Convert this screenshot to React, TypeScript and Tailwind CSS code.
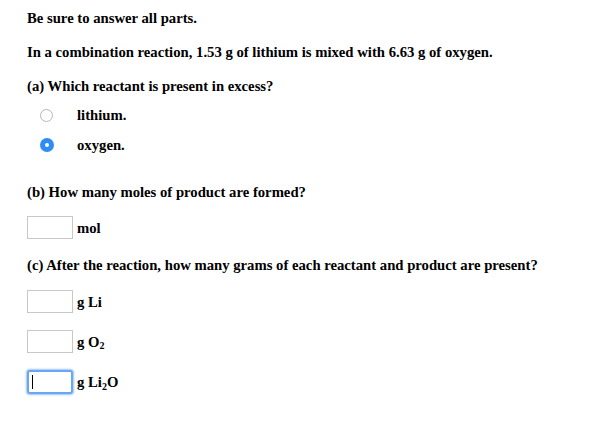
import React from "react";

const font = { fontFamily: '"Liberation Serif", "Times New Roman", serif' };

function Box({ focused = false }: { focused?: boolean }) {
  return focused ? (
    <div className="w-[46px] h-[24px] rounded-[3px] border-2 border-[#6aa7f0] shadow-[0_0_2px_1px_#9cc4f5] bg-white flex items-center pl-[3px]">
      <div className="w-px h-[14px] bg-black" />
    </div>
  ) : (
    <div className="w-[46px] h-[23px] border border-[#c8c8c8] bg-white" />
  );
}

export default function App() {
  return (
    <div style={font} className="w-[614px] h-[422px] bg-white text-black font-bold text-[14.7px] leading-[16px] pl-[27px] pt-[10px]">
      <div>Be sure to answer all parts.</div>
      <div className="mt-[18px]">In a combination reaction, 1.53 g of lithium is mixed with 6.63 g of oxygen.</div>
      <div className="mt-[18px]">(a) Which reactant is present in excess?</div>
      <div className="mt-[13px] flex items-center h-[16px]">
        <div className="w-[13px] h-[13px] rounded-full border border-[#b5b5b5] bg-white ml-[13px]" />
        <span className="ml-[24px]">lithium.</span>
      </div>
      <div className="mt-[14px] flex items-center h-[16px]">
        <div className="w-[14px] h-[14px] rounded-full bg-[#2e8cf4] ml-[13px] flex items-center justify-center">
          <div className="w-[4px] h-[4px] rounded-full bg-white" />
        </div>
        <span className="ml-[23px]">oxygen.</span>
      </div>
      <div className="mt-[31px]">(b) How many moles of product are formed?</div>
      <div className="mt-[16px] flex items-center gap-[4px]">
        <Box />
        <span>mol</span>
      </div>
      <div className="mt-[18px]">(c) After the reaction, how many grams of each reactant and product are present?</div>
      <div className="mt-[17px] flex items-center gap-[4px]">
        <Box />
        <span>g Li</span>
      </div>
      <div className="mt-[17px] flex items-center gap-[4px]">
        <Box />
        <span className="leading-[16px]">
          g O<sub className="text-[10px] leading-none">2</sub>
        </span>
      </div>
      <div className="mt-[17px] flex items-center gap-[4px]">
        <Box focused />
        <span className="leading-[16px]">
          g Li<sub className="text-[10px] leading-none">2</sub>O
        </span>
      </div>
    </div>
  );
}
